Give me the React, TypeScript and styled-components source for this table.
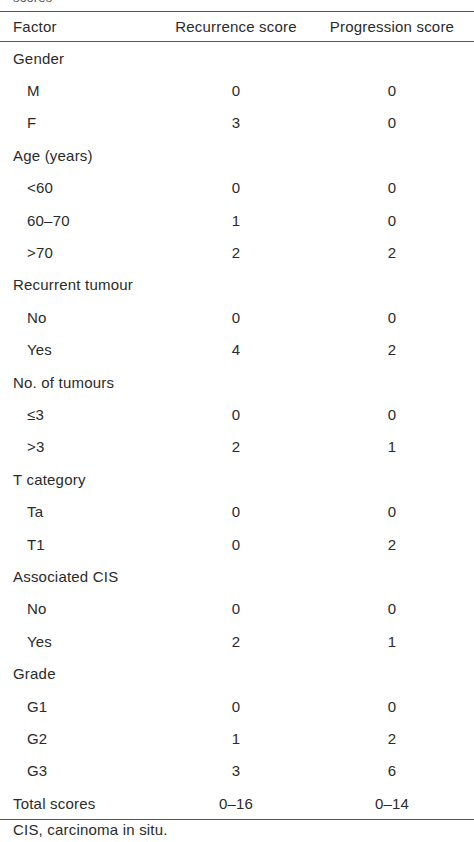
import React from 'react';
import styled, {createGlobalStyle} from "styled-components";

type Row = {label: string; rec?: string; prog?: string; sub?: boolean};

const rows: Row[] = [
    {label: "Gender"},
    {label: "M", rec: "0", prog: "0", sub: true},
    {label: "F", rec: "3", prog: "0", sub: true},
    {label: "Age (years)"},
    {label: "<60", rec: "0", prog: "0", sub: true},
    {label: "60–70", rec: "1", prog: "0", sub: true},
    {label: ">70", rec: "2", prog: "2", sub: true},
    {label: "Recurrent tumour"},
    {label: "No", rec: "0", prog: "0", sub: true},
    {label: "Yes", rec: "4", prog: "2", sub: true},
    {label: "No. of tumours"},
    {label: "≤3", rec: "0", prog: "0", sub: true},
    {label: ">3", rec: "2", prog: "1", sub: true},
    {label: "T category"},
    {label: "Ta", rec: "0", prog: "0", sub: true},
    {label: "T1", rec: "0", prog: "2", sub: true},
    {label: "Associated CIS"},
    {label: "No", rec: "0", prog: "0", sub: true},
    {label: "Yes", rec: "2", prog: "1", sub: true},
    {label: "Grade"},
    {label: "G1", rec: "0", prog: "0", sub: true},
    {label: "G2", rec: "1", prog: "2", sub: true},
    {label: "G3", rec: "3", prog: "6", sub: true},
    {label: "Total scores", rec: "0–16", prog: "0–14"},
];

export default function App() {
    return (
        <>
            <GlobalStyle/>
            <Page>
                <Caption><CaptionText>scores</CaptionText></Caption>
                <HeaderRow>
                    <Cell>Factor</Cell>
                    <NumCell>Recurrence score</NumCell>
                    <NumCell>Progression score</NumCell>
                </HeaderRow>
                <Body>
                    {rows.map((r, i) => (
                        <BodyRow key={i}>
                            <Cell $sub={r.sub}>{r.label}</Cell>
                            <NumCell>{r.rec ?? ""}</NumCell>
                            <NumCell>{r.prog ?? ""}</NumCell>
                        </BodyRow>
                    ))}
                </Body>
                <Footnote>CIS, carcinoma in situ.</Footnote>
            </Page>
        </>
    );
}

const GlobalStyle = createGlobalStyle`
  html, body {
    margin: 0;
    padding: 0;
    background: #fff;
  }
`

const Page = styled.div`
  width: 474px;
  font-family: "Liberation Sans", Arial, sans-serif;
  font-size: 15px;
  letter-spacing: 0.2px;
  color: #2b2b2b;
`

const Caption = styled.div`
  height: 11px;
  overflow: hidden;
  border-bottom: 1px solid #555;
  padding-left: 13px;
`

const CaptionText = styled.div`
  font-size: 13px;
  line-height: 13px;
  margin-top: -9.5px;
  color: #555;
`

const gridCols = `
  display: grid;
  grid-template-columns: 158px 156px 156px;
  align-items: center;
`

const HeaderRow = styled.div`
  ${gridCols};
  height: 29px;
  border-bottom: 1.5px solid #555;
`

const Body = styled.div`
  border-bottom: 1.5px solid #555;
`

const BodyRow = styled.div`
  ${gridCols};
  height: 32.4px;
`

const Cell = styled.div<{ $sub?: boolean }>`
  padding-left: ${p => (p.$sub ? "27px" : "13px")};
  white-space: nowrap;
`

const NumCell = styled.div`
  text-align: center;
  white-space: nowrap;
`

const Footnote = styled.div`
  padding: 1px 13px 0;
  line-height: 18px;
`
